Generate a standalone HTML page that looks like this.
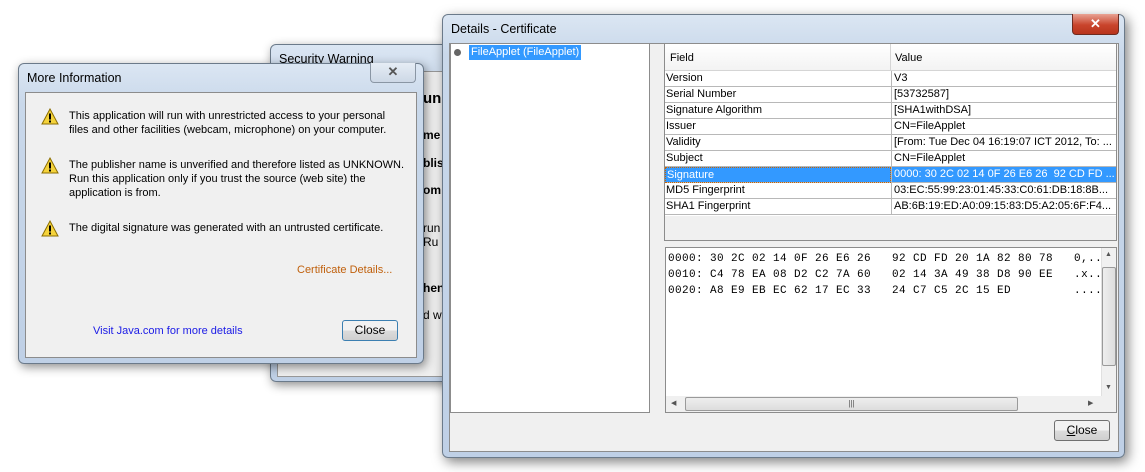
<!DOCTYPE html>
<html><head><meta charset="utf-8"><style>
*{margin:0;padding:0;box-sizing:border-box}
body{width:1145px;height:472px;background:#fff;position:relative;overflow:hidden;font-family:"Liberation Sans",sans-serif;font-size:11px;color:#000}
.a{position:absolute}
.win{position:absolute;border:1px solid #6b7a8a;border-radius:6px;background:linear-gradient(#dbe6f3,#c9d8ea 40px,#bfd0e6);box-shadow:2px 3px 10px rgba(0,0,0,.45)}
.t{font-size:12.5px;color:#000}
.btn{position:absolute;border:1px solid #707070;border-radius:3px;background:linear-gradient(#f2f2f2 50%,#dcdcdc 50%,#cfcfcf);text-align:center;font-size:12px;line-height:19px}
.row{position:absolute;left:0;width:451px;height:16px;border-bottom:1px solid #b8b8b8;line-height:15px;font-size:11px}
.row span{position:absolute;top:0;white-space:nowrap}
.row .v{left:226px;border-left:1px solid #b8b8b8;padding-left:2px;height:16px}
.mono{font-family:"Liberation Mono",monospace;font-size:11px;letter-spacing:0.4px;line-height:16px;white-space:pre}
.mi{font-size:11px;line-height:14px}
</style></head><body>

<!-- Security Warning -->
<div class="win" style="left:270px;top:44px;width:190px;height:338px">
<div class="a t" style="left:8px;top:7px">Security Warning</div>
<div class="a" style="left:6px;top:26px;width:190px;height:306px;background:#f0f0f0;border:1px solid #999"></div>
<div class="a" style="left:152px;top:45px;font-weight:bold;font-size:15px">un</div>
<div class="a" style="left:152px;top:83px;font-weight:bold;font-size:12px">me</div>
<div class="a" style="left:152px;top:111px;font-weight:bold;font-size:12px">blis</div>
<div class="a" style="left:152px;top:138px;font-weight:bold;font-size:12px">om</div>
<div class="a" style="left:152px;top:176px;font-size:12px">run</div>
<div class="a" style="left:152px;top:190px;font-size:12px">Ru</div>
<div class="a" style="left:152px;top:236px;font-weight:bold;font-size:12px">hen</div>
<div class="a" style="left:152px;top:263px;font-size:12px">d wa</div>
</div>

<!-- More Information -->
<div class="win" style="left:18px;top:63px;width:406px;height:301px">
<div class="a t" style="left:8px;top:7px">More Information</div>
<div class="a" style="left:351px;top:-1px;width:46px;height:20px;border:1px solid #8a96a4;border-top:none;border-radius:0 0 4px 4px;background:linear-gradient(#e6edf5,#cdd8e6);text-align:center;font-size:13px;font-weight:bold;color:#555;line-height:18px">✕</div>
<div class="a" style="left:6px;top:28px;width:392px;height:266px;background:#f0f0f0;border:1px solid #8c8c8c"></div>
</div>
<svg class="a" style="left:41px;top:108px" width="18" height="135">
<g id="w"><path d="M9 1 L17 16 L1 16 Z" fill="#f5d33b" stroke="#8a6d00" stroke-width="1"/><rect x="8" y="5.5" width="2" height="6" fill="#000"/><rect x="8" y="12.5" width="2" height="2" fill="#000"/></g>
<use href="#w" y="49"/><use href="#w" y="112"/>
</svg>
<div class="a mi" style="left:69px;top:109px">This application will run with unrestricted access to your personal<br>files and other facilities (webcam, microphone) on your computer.</div>
<div class="a mi" style="left:69px;top:158px">The publisher name is unverified and therefore listed as UNKNOWN.<br>Run this application only if you trust the source (web site) the<br>application is from.</div>
<div class="a mi" style="left:69px;top:221px">The digital signature was generated with an untrusted certificate.</div>
<div class="a mi" style="left:297px;top:263px;color:#c0600c">Certificate Details...</div>
<div class="a mi" style="left:93px;top:324px;color:#1a1ae6">Visit Java.com for more details</div>
<div class="btn" style="left:342px;top:320px;width:56px;height:21px;border-color:#3c7fb1">Close</div>

<!-- Details -->
<div class="win" style="left:442px;top:14px;width:683px;height:444px;box-shadow:3px 4px 12px rgba(0,0,0,.5)">
<div class="a t" style="left:8px;top:7px">Details - Certificate</div>
<div class="a" style="left:629px;top:-1px;width:47px;height:21px;border:1px solid #6e2b20;border-top:none;border-radius:0 0 4px 4px;background:linear-gradient(#e8a293,#c9442c 55%,#b8341c);text-align:center;color:#fff;font-weight:bold;font-size:13px;line-height:19px">✕</div>
<div class="a" style="left:6px;top:28px;width:670px;height:409px;background:#f0f0f0;border:1px solid #8c8c8c"></div>
</div>
<!-- tree -->
<div class="a" style="left:450px;top:43px;width:200px;height:370px;background:#fff;border:1px solid #8c8c8c"></div>
<div class="a" style="left:454px;top:49px;width:7px;height:7px;border-radius:50%;background:#666"></div>
<div class="a" style="left:469px;top:45px;background:#3399ff;color:#fff;padding:0 2px;line-height:15px">FileApplet (FileApplet)</div>
<!-- table -->
<div class="a" style="left:664px;top:43px;width:453px;height:198px;background:#f0f0f0;border:1px solid #8c8c8c;overflow:hidden">
<div class="a" style="left:0;top:0;width:451px;height:27px;background:linear-gradient(#fff,#f3f3f3);border-bottom:1px solid #d5d5d5"></div>
<div class="a" style="left:225px;top:0;width:1px;height:27px;background:#d5d5d5"></div>
<div class="a" style="left:5px;top:8px">Field</div>
<div class="a" style="left:230px;top:8px">Value</div>
<div class="a" style="left:0;top:27px;width:451px;height:145px;background:#fff"></div>
<div class="row" style="top:27px"><span style="left:1px">Version</span><span class="v">V3</span></div>
<div class="row" style="top:43px"><span style="left:1px">Serial Number</span><span class="v">[53732587]</span></div>
<div class="row" style="top:59px"><span style="left:1px">Signature Algorithm</span><span class="v">[SHA1withDSA]</span></div>
<div class="row" style="top:75px"><span style="left:1px">Issuer</span><span class="v">CN=FileApplet</span></div>
<div class="row" style="top:91px"><span style="left:1px">Validity</span><span class="v">[From: Tue Dec 04 16:19:07 ICT 2012, To: ...</span></div>
<div class="row" style="top:107px"><span style="left:1px">Subject</span><span class="v">CN=FileApplet</span></div>
<div class="row" style="top:123px;background:#3399ff;color:#fff"><span style="left:0;width:226px;height:16px;border:1px dotted #c86400;padding-left:1px">Signature</span><span class="v">0000: 30 2C 02 14 0F 26 E6 26&nbsp;&nbsp;92 CD FD ...</span></div>
<div class="row" style="top:139px"><span style="left:1px">MD5 Fingerprint</span><span class="v">03:EC:55:99:23:01:45:33:C0:61:DB:18:8B...</span></div>
<div class="row" style="top:155px"><span style="left:1px">SHA1 Fingerprint</span><span class="v">AB:6B:19:ED:A0:09:15:83:D5:A2:05:6F:F4...</span></div>
</div>
<!-- hex -->
<div class="a" style="left:665px;top:247px;width:452px;height:166px;background:#fff;border:1px solid #8c8c8c;overflow:hidden">
<div class="a mono" style="left:2px;top:3px">0000: 30 2C 02 14 0F 26 E6 26   92 CD FD 20 1A 82 80 78   0,...
0010: C4 78 EA 08 D2 C2 7A 60   02 14 3A 49 38 D8 90 EE   .x...
0020: A8 E9 EB EC 62 17 EC 33   24 C7 C5 2C 15 ED         ....b</div>
<div class="a" style="left:435px;top:0;width:16px;height:148px;background:#f0f0f0;border-left:1px solid #e0e0e0"></div>
<div class="a" style="left:436px;top:19px;width:14px;height:99px;border:1px solid #9a9a9a;border-radius:2px;background:linear-gradient(90deg,#eee,#ddd)"></div>
<div class="a" style="left:439px;top:3px;font-size:7px;color:#555">▲</div>
<div class="a" style="left:439px;top:136px;font-size:7px;color:#555">▼</div>
<div class="a" style="left:0;top:148px;width:451px;height:16px;background:#f0f0f0"></div>
<div class="a" style="left:19px;top:149px;width:333px;height:14px;border:1px solid #9a9a9a;border-radius:2px;background:linear-gradient(#eee,#ddd);text-align:center;font-size:8px;color:#555;line-height:12px">|||</div>
<div class="a" style="left:5px;top:151px;font-size:7px;color:#555">◀</div>
<div class="a" style="left:422px;top:151px;font-size:7px;color:#555">▶</div>
</div>
<div class="btn" style="left:1054px;top:420px;width:56px;height:21px"><u>C</u>lose</div>
</body></html>
